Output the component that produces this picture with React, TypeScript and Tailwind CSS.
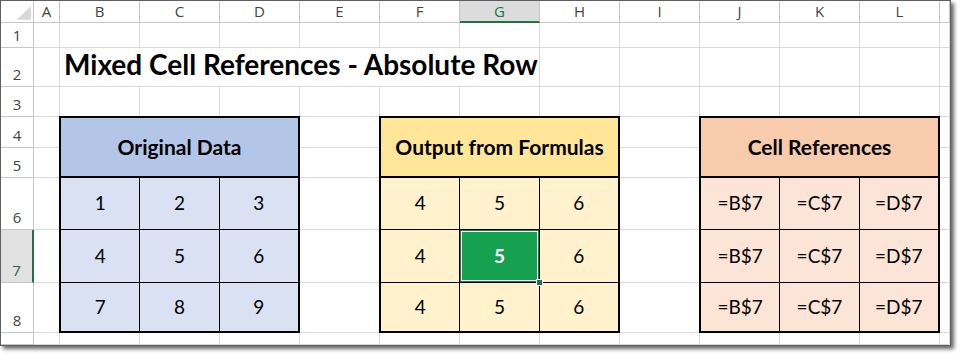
import React from "react";

const cols = ["A", "B", "C", "D", "E", "F", "G", "H", "I", "J", "K", "L", ""];
const rows = [1, 2, 3, 4, 5, 6, 7, 8, 9];

const sheetGrid =
  "grid grid-cols-[33px_26px_repeat(11,80px)_10px] grid-rows-[22px_25px_39px_30px_31px_30px_52px_53px_50px_12px]";

const cellFont = { fontFamily: '"Lato", "Liberation Sans", sans-serif' };

type TableProps = {
  title: string;
  place: string;
  headBg: string;
  bodyBg: string;
  data: string[][];
  selected?: [number, number];
};

const DataTable: React.FC<TableProps> = ({ title, place, headBg, bodyBg, data, selected }) => {
  return (
    <div className={`${place} row-start-5 row-span-5 -ml-px -mt-px flex flex-col border-2 border-black text-black`}>
      <div className={`h-[60px] border-b-2 border-black flex items-center justify-center font-bold text-[21px] ${headBg}`}>
        {title}
      </div>
      {data.map((row, ri) => (
        <div
          key={ri}
          className={`flex ${ri === 0 ? "h-[52px] border-b border-black" : ri === 1 ? "h-[53px] border-b border-black" : "flex-1"}`}
        >
          {row.map((v, ci) => {
            const isSel = selected && selected[0] === ri && selected[1] === ci;
            return (
              <div
                key={ci}
                className={`relative flex-1 flex items-center justify-center text-[19px] ${ci < 2 ? "border-r border-black" : ""} ${
                  isSel
                    ? "bg-[#16a150] text-white font-bold shadow-[inset_0_0_0_1px_#2e7049,inset_0_0_0_2px_#ffffff]"
                    : bodyBg
                }`}
              >
                {v}
                {isSel && (
                  <span className="absolute -right-[4px] -bottom-[4px] z-10 w-[7px] h-[7px] bg-[#217346] border border-white" />
                )}
              </div>
            );
          })}
        </div>
      ))}
    </div>
  );
};

export default function App() {
  return (
    <div className="w-[961px] h-[356px] bg-white overflow-hidden">
      <div className="grid w-max border border-[#5f5f5f] shadow-[3px_3px_4px_rgba(0,0,0,0.6)]">
        {/* gridlines + headers */}
        <div
          className={`col-start-1 row-start-1 ${sheetGrid} text-[15px] text-[#444]`}
          style={{ fontFamily: '"Open Sans", "Noto Sans", sans-serif' }}
        >
          <div className="border-r border-b border-[#c6c6c6] bg-white flex">
            <svg width="33" height="22" viewBox="0 0 33 22">
              <polygon points="16,19 31,19 31,5" fill="#d8d8d8" />
            </svg>
          </div>
          {cols.map((c, i) =>
            c === "G" ? (
              <div
                key={i}
                className="flex items-center justify-center bg-[#dcdcdc] border-r border-[#c6c6c6] border-b-2 border-b-[#217346] text-[#217346]"
              >
                {c}
              </div>
            ) : (
              <div key={i} className="flex items-center justify-center bg-white border-r border-b border-[#c6c6c6]">
                {c}
              </div>
            )
          )}
          {rows.map((r) => (
            <React.Fragment key={r}>
              {r === 7 ? (
                <div className="flex items-end justify-center pb-[1px] bg-[#e1e1e1] border-b border-[#c6c6c6] border-r-2 border-r-[#217346] text-[#2f5f45]">
                  {r}
                </div>
              ) : (
                <div className="flex items-end justify-center pb-[1px] bg-white border-r border-b border-[#c6c6c6]">
                  {r < 9 ? r : ""}
                </div>
              )}
              {cols.map((c, i) => (
                <div key={i} className="border-r border-b border-[#d9d9d9]" />
              ))}
            </React.Fragment>
          ))}
        </div>

        {/* content */}
        <div className={`col-start-1 row-start-1 ${sheetGrid}`} style={cellFont}>
          <div className="col-start-3 col-span-6 row-start-3 flex items-end pl-1 pb-[1px] bg-white border-r border-b border-[#d9d9d9] font-bold text-[28px] text-black whitespace-nowrap">
            Mixed Cell References - Absolute Row
          </div>
          <DataTable
            title="Original Data"
            place="col-start-3 col-span-3"
            headBg="bg-[#b4c6e7]"
            bodyBg="bg-[#d9e1f2]"
            data={[
              ["1", "2", "3"],
              ["4", "5", "6"],
              ["7", "8", "9"],
            ]}
          />
          <DataTable
            title="Output from Formulas"
            place="col-start-7 col-span-3"
            headBg="bg-[#ffe699]"
            bodyBg="bg-[#fff2cc]"
            data={[
              ["4", "5", "6"],
              ["4", "5", "6"],
              ["4", "5", "6"],
            ]}
            selected={[1, 1]}
          />
          <DataTable
            title="Cell References"
            place="col-start-11 col-span-3"
            headBg="bg-[#f8cbad]"
            bodyBg="bg-[#fce4d6]"
            data={[
              ["=B$7", "=C$7", "=D$7"],
              ["=B$7", "=C$7", "=D$7"],
              ["=B$7", "=C$7", "=D$7"],
            ]}
          />
        </div>
      </div>
    </div>
  );
}
